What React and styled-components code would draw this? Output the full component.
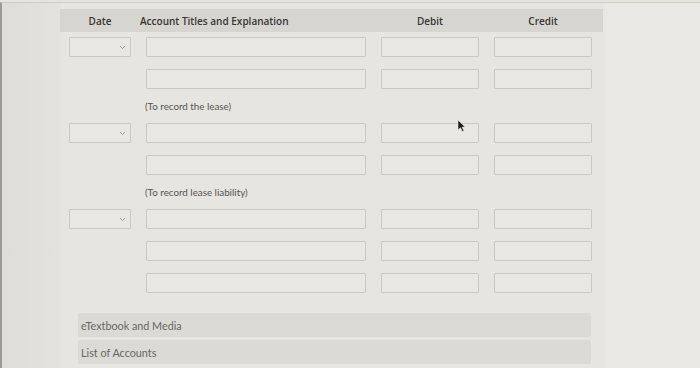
import React from "react";
import styled, { createGlobalStyle } from "styled-components";

const entries = [
  {
    lines: [{ date: true }, { date: false }],
    note: "(To record the lease)",
  },
  {
    lines: [{ date: true }, { date: false }],
    note: "(To record lease liability)",
  },
  {
    lines: [{ date: true }, { date: false }, { date: false }],
  },
];

export default function App() {
  return (
    <>
      <GlobalStyle />
      <Page>
        <Sheet>
          <HeaderBar>
            <HeadCell $center>Date</HeadCell>
            <HeadCell $shift>Account Titles and Explanation</HeadCell>
            <HeadCell $center>Debit</HeadCell>
            <HeadCell $center>Credit</HeadCell>
          </HeaderBar>
          <Body>
            {entries.map((entry, i) => (
              <React.Fragment key={i}>
                {entry.lines.map((line, j) => (
                  <Row key={j}>
                    {line.date ? (
                      <DateSelect>
                        <svg width="7" height="5" viewBox="0 0 7 5">
                          <path d="M1 1l2.5 2.5L6 1" fill="none" stroke="#9a9893" strokeWidth="1" />
                        </svg>
                      </DateSelect>
                    ) : (
                      <span />
                    )}
                    <Field />
                    <Field />
                    <Field />
                  </Row>
                ))}
                {entry.note && <Note>{entry.note}</Note>}
              </React.Fragment>
            ))}
          </Body>
          <Links>
            <LinkBar>eTextbook and Media</LinkBar>
            <LinkBar>List of Accounts</LinkBar>
          </Links>
        </Sheet>
        <Cursor width="9" height="13" viewBox="0 0 9 13">
          <path d="M1 1v10l2.5-2.3 1.8 3.8 1.6-.7-1.8-3.7H8z" fill="#1c1c1c" stroke="#e6e4df" strokeWidth="0.6" />
        </Cursor>
      </Page>
    </>
  );
}

const GlobalStyle = createGlobalStyle`
  body {
    margin: 0;
    font-family: Lato, "Open Sans", "Liberation Sans", sans-serif;
    background: #e6e4df;
  }
`;

const Page = styled.div`
  position: relative;
  width: 700px;
  height: 368px;
  box-sizing: border-box;
  border-top: 1px solid #cfcdc8;
  border-left: 2px solid #9c9a95;
  margin-top: 2px;
  background: linear-gradient(90deg, #dfddd8 0px, #e4e2dd 58px, #e7e5e0 60px, #e7e5e0 600px, #ebe9e5 606px);
  overflow: hidden;
`;

const Sheet = styled.div`
  margin-left: 58px;
  padding-top: 6px;
  width: 543px;
`;

const HeaderBar = styled.div`
  display: grid;
  grid-template-columns: 62px 220px 98px 98px;
  column-gap: 15px;
  align-items: center;
  height: 23px;
  padding-left: 9px;
  background: #d7d5d0;
`;

const HeadCell = styled.div`
  font-family: "Open Sans", Lato, sans-serif;
  font-size: 10px;
  font-weight: 600;
  color: #363533;
  white-space: nowrap;
  text-align: ${(p) => (p.$center ? "center" : "left")};
  margin-left: ${(p) => (p.$shift ? "-6px" : "0")};
`;

const Body = styled.div`
  display: flex;
  flex-direction: column;
  padding-top: 5px;
  padding-left: 9px;
`;

const Row = styled.div`
  display: grid;
  grid-template-columns: 62px 220px 98px 98px;
  column-gap: 15px;
  height: 20px;

  & + & {
    margin-top: 12px;
  }
`;

const Field = styled.div`
  box-sizing: border-box;
  height: 20px;
  border: 1px solid #cbc9c4;
  border-radius: 1px;
  background: #e9e7e2;
`;

const DateSelect = styled(Field)`
  display: flex;
  align-items: center;
  justify-content: flex-end;
  padding-right: 4px;
`;

const Note = styled.div`
  height: 34px;
  display: flex;
  align-items: center;
  padding-left: 76px;
  font-size: 9.8px;
  color: #555452;
`;

const Links = styled.div`
  display: flex;
  flex-direction: column;
  gap: 3px;
  margin-top: 20px;
  margin-left: 18px;
  width: 513px;
`;

const LinkBar = styled.div`
  height: 24px;
  display: flex;
  align-items: center;
  padding-left: 3px;
  background: #dcdad5;
  border-radius: 2px;
  font-size: 10.8px;
  color: #686664;
`;

const Cursor = styled.svg`
  position: absolute;
  left: 455px;
  top: 116px;
`;
